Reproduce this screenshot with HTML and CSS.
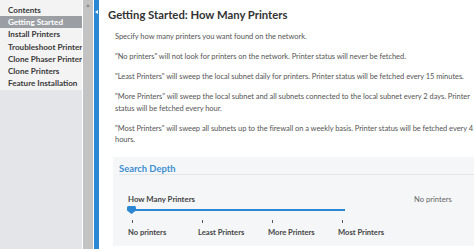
FILE: index.html
```html
<!DOCTYPE html>
<html>
<head>
<meta charset="utf-8">
<link rel="stylesheet" href="styles.css">
</head>
<body>
<div class="app">
  <aside class="sidebar">
    <ul class="toc">
      <li class="toc-item">Contents</li>
      <li class="toc-item selected">Getting Started</li>
      <li class="toc-item">Install Printers</li>
      <li class="toc-item">Troubleshoot Printers</li>
      <li class="toc-item">Clone Phaser Printers</li>
      <li class="toc-item">Clone Printers</li>
      <li class="toc-item">Feature Installation</li>
    </ul>
    <div class="sidebar-rest"></div>
  </aside>
  <div class="scrollbar"><span class="scroll-up"></span></div>
  <div class="splitter"><span class="collapse"></span></div>
  <main class="main">
    <h1 class="title">Getting Started: How Many Printers</h1>
    <div class="body">
      <p>Specify how many printers you want found on the network.</p>
      <p>"No printers" will not look for printers on the network. Printer status will never be fetched.</p>
      <p>"Least Printers" will sweep the local subnet daily for printers. Printer status will be fetched every 15 minutes.</p>
      <p>"More Printers" will sweep the local subnet and all subnets connected to the local subnet every 2 days. Printer status will be fetched every hour.</p>
      <p>"Most Printers" will sweep all subnets up to the firewall on a weekly basis. Printer status will be fetched every 4 hours.</p>
      <section class="panel">
        <div class="panel-head">Search Depth</div>
        <div class="panel-body">
          <div class="slider-col">
            <div class="slider-label">How Many Printers</div>
            <div class="track">
              <svg class="thumb" width="9" height="8" viewBox="0 0 9 8"><path d="M0 1.5 Q0 0 1.5 0 H7.5 Q9 0 9 1.5 V4.5 L4.5 8 L0 4.5 Z" fill="#2b86d4"/></svg>
            </div>
            <div class="ticks">
              <div class="tick-col"><span class="tick"></span><span class="tick-label">No printers</span></div>
              <div class="tick-col"><span class="tick"></span><span class="tick-label">Least Printers</span></div>
              <div class="tick-col"><span class="tick"></span><span class="tick-label">More Printers</span></div>
              <div class="tick-col"><span class="tick"></span><span class="tick-label">Most Printers</span></div>
            </div>
          </div>
          <div class="value">No printers</div>
        </div>
      </section>
    </div>
  </main>
</div>
</body>
</html>
```
FILE: styles.css
```css
html, body {
  margin: 0;
  padding: 0;
  width: 474px;
  height: 249px;
  overflow: hidden;
  background: #ffffff;
  font-family: "Lato", "Open Sans", sans-serif;
}
.app {
  display: flex;
  height: 249px;
}
.sidebar {
  width: 82px;
  flex: none;
  display: flex;
  flex-direction: column;
  overflow: hidden;
}
.toc {
  list-style: none;
  margin: 0;
  padding: 4px 0 0 0;
  height: 86px;
  background: #f3f3f3;
}
.toc-item {
  height: 12.2px;
  line-height: 12px;
  padding-left: 8px;
  font-size: 8.1px;
  font-weight: 700;
  color: #3a3a3a;
  white-space: nowrap;
}
.toc-item.selected {
  background: #9b9ea3;
  color: #ffffff;
}
.sidebar-rest {
  flex: 1;
  background: #e3e5e8;
}
.scrollbar {
  width: 10px;
  flex: none;
  margin-left: 1px;
  background: #c4c3c4;
  position: relative;
}
.scroll-up {
  position: absolute;
  left: 3px;
  top: 4px;
  width: 0;
  height: 0;
  border-left: 2px solid transparent;
  border-right: 2px solid transparent;
  border-bottom: 3px solid #8a8a8a;
}
.splitter {
  width: 5px;
  flex: none;
  margin-left: 1px;
  background: #2b86d4;
  position: relative;
}
.collapse {
  position: absolute;
  left: 1px;
  top: 10px;
  width: 0;
  height: 0;
  border-top: 2px solid transparent;
  border-bottom: 2px solid transparent;
  border-right: 3px solid #ffffff;
}
.main {
  flex: none;
  width: 400px;
  padding: 7px 0 0 9px;
}
.title {
  margin: 0;
  font-size: 11.3px;
  line-height: 16px;
  font-weight: 700;
  color: #333333;
  white-space: nowrap;
}
.body {
  padding-left: 7px;
  width: 372px;
}
.body p {
  margin: 0 0 8.5px 0;
  font-size: 7.5px;
  letter-spacing: -0.05px;
  line-height: 11.5px;
  color: #555555;
}
.body p:first-child {
  margin-top: 8px;
}
.panel {
  margin-top: 11px;
  width: 380px;
  margin-left: -2px;
  background: #f5f6f8;
  padding: 0 6px 0 6px;
  height: 89px;
}
.panel-head {
  height: 17px;
  line-height: 24px;
  font-size: 9.4px;
  font-weight: 700;
  color: #3d8fd2;
  border-bottom: 1px solid #e2e4e8;
}
.panel-body {
  display: flex;
  padding: 19px 0 0 9px;
}
.slider-col {
  width: 224px;
  flex: none;
}
.slider-label {
  font-size: 7.8px;
  line-height: 10px;
  font-weight: 700;
  color: #444444;
}
.track {
  position: relative;
  margin-top: 5px;
  height: 2px;
  width: 217px;
  background: #2b86d4;
}
.thumb {
  position: absolute;
  left: -1px;
  top: -3px;
  display: block;
}
.ticks {
  display: flex;
  margin-top: 9px;
}
.tick-col {
  width: 70px;
  flex: none;
  display: flex;
  flex-direction: column;
}
.tick-col:last-child {
  width: auto;
}
.tick {
  width: 1px;
  height: 3px;
  margin-left: 4px;
  background: #555555;
}
.tick-label {
  margin-top: 4px;
  font-size: 7.6px;
  line-height: 10px;
  font-weight: 700;
  color: #444444;
  white-space: nowrap;
}
.value {
  margin-left: 62px;
  font-size: 7.6px;
  line-height: 10px;
  color: #666666;
}
```
